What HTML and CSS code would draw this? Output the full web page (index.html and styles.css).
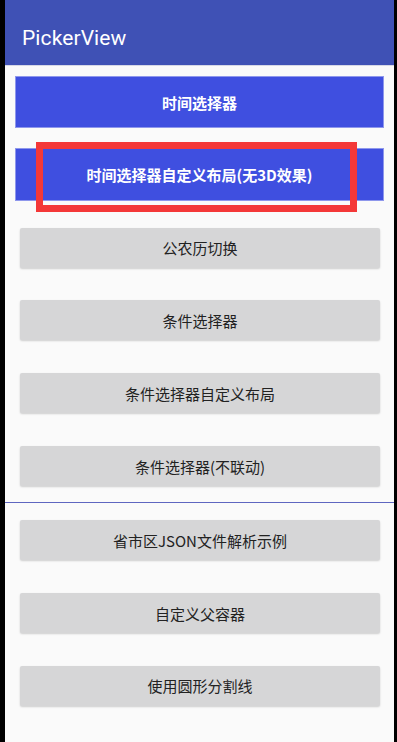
FILE: index.html
```html
<!DOCTYPE html>
<html lang="zh-CN">
<head>
<meta charset="utf-8">
<meta name="viewport" content="width=device-width, initial-scale=1">
<title>PickerView</title>
<link rel="stylesheet" href="styles.css">
</head>
<body>
<div class="screen">
  <header class="appbar">
    <h1 class="title">PickerView</h1>
  </header>
  <main class="content">
    <div class="btn btn-primary btn-first">时间选择器</div>
    <div class="highlight-wrap">
      <div class="btn btn-primary btn-second">时间选择器自定义布局(无3D效果)</div>
      <div class="highlight"></div>
    </div>
    <div class="btn btn-gray btn-g1">公农历切换</div>
    <div class="btn btn-gray">条件选择器</div>
    <div class="btn btn-gray">条件选择器自定义布局</div>
    <div class="btn btn-gray">条件选择器(不联动)</div>
    <div class="divider"></div>
    <div class="btn btn-gray btn-after-divider">省市区JSON文件解析示例</div>
    <div class="btn btn-gray">自定义父容器</div>
    <div class="btn btn-gray">使用圆形分割线</div>
  </main>
</div>
</body>
</html>
```

FILE: styles.css
```css
* {
  box-sizing: border-box;
}

html, body {
  margin: 0;
  padding: 0;
  background: #000;
}

body {
  width: 397px;
  height: 742px;
  overflow: hidden;
  font-family: Roboto, "Noto Sans CJK SC", "Noto Sans", sans-serif;
}

.screen {
  margin: 0 3px 0 5px;
  height: 742px;
  background: #fafafa;
  overflow: hidden;
}

.appbar {
  height: 66px;
  background: #3f51b5;
  display: flex;
  align-items: center;
  padding: 10px 0 0 17px;
  border-bottom: 1px solid #d6d8e6;
}

.title {
  margin: 0;
  color: #fff;
  font-family: Roboto, "Noto Sans", sans-serif;
  font-weight: 400;
  font-size: 21px;
  letter-spacing: 0.1px;
}

.content {
  display: flex;
  flex-direction: column;
  padding-top: 10px;
}

.btn {
  display: flex;
  align-items: center;
  justify-content: center;
  font-family: "Noto Sans CJK SC", Roboto, sans-serif;
  font-size: 15px;
}

.btn-primary {
  margin: 0 10px;
  height: 52px;
  background: #3f4fe0;
  color: #fff;
  font-weight: 700;
  border: 1px solid #8e97ec;
}

.highlight-wrap {
  position: relative;
  margin-top: 20px;
}

.btn-second {
  height: 53px;
}

.highlight {
  position: absolute;
  left: 31px;
  top: -6px;
  width: 321px;
  height: 70px;
  border: 7px solid #f43838;
}

.btn-gray {
  margin: 32.8px 14px 0 15px;
  height: 40px;
  background: #d6d6d7;
  color: #222;
  border-radius: 2px;
  box-shadow: 0 1px 2px rgba(0, 0, 0, 0.18);
}

.btn-g1 {
  margin-top: 26.7px;
}

.divider {
  margin-top: 16px;
  height: 1.3px;
  background: #5e66c0;
}

.btn-after-divider {
  margin-top: 17px;
}
```
